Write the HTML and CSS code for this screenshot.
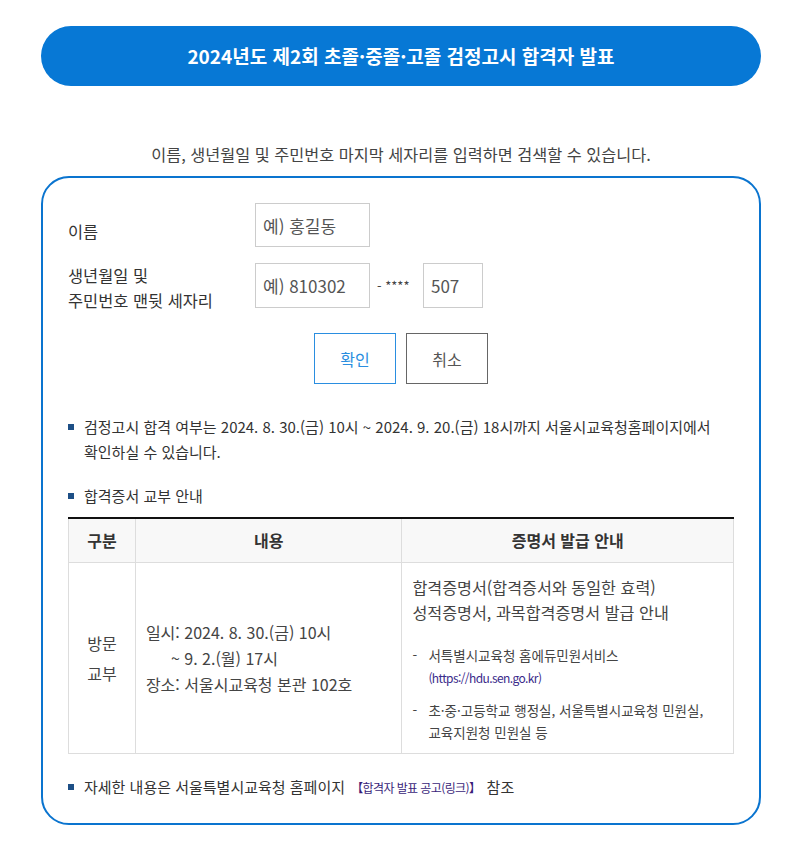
FILE: index.html
```html
<!DOCTYPE html>
<html lang="ko">
<head>
<meta charset="utf-8">
<title>2024년도 제2회 검정고시 합격자 발표</title>
<link rel="stylesheet" href="styles.css">
</head>
<body>
<div class="page">
  <h1 class="title">2024년도 제2회 초졸·중졸·고졸 검정고시 합격자 발표</h1>
  <p class="intro">이름, 생년월일 및 주민번호 마지막 세자리를 입력하면 검색할 수 있습니다.</p>
  <div class="box">
    <div class="form">
      <div class="row row-name">
        <label class="label" for="nm">이름</label>
        <input class="inp inp-name" id="nm" type="text" placeholder="예) 홍길동">
      </div>
      <div class="row row-birth">
        <label class="label" for="bd">생년월일 및<br>주민번호 맨뒷 세자리</label>
        <div class="birth-fields">
          <input class="inp inp-name" id="bd" type="text" placeholder="예) 810302">
          <span class="mask">- ****</span>
          <input class="inp inp-tail" type="text" placeholder="507">
        </div>
      </div>
      <div class="buttons">
        <button class="btn btn-ok" type="button">확인</button>
        <button class="btn btn-cancel" type="button">취소</button>
      </div>
    </div>
    <ul class="notes">
      <li class="note">검정고시 합격 여부는 2024. 8. 30.(금) 10시 ~ 2024. 9. 20.(금) 18시까지 서울시교육청홈페이지에서<br>확인하실 수 있습니다.</li>
      <li class="note note-sub">합격증서 교부 안내</li>
    </ul>
    <table class="tbl">
      <thead>
        <tr>
          <th class="c1">구분</th>
          <th class="c2">내용</th>
          <th class="c3">증명서 발급 안내</th>
        </tr>
      </thead>
      <tbody>
        <tr>
          <td class="c1 kind">방문<br>교부</td>
          <td class="c2 when">일시: 2024. 8. 30.(금) 10시<br><span class="indent">~ 9. 2.(월) 17시</span><br>장소: 서울시교육청 본관 102호</td>
          <td class="c3 cert">
            <p class="cert-head">합격증명서(합격증서와 동일한 효력)<br>성적증명서, 과목합격증명서 발급 안내</p>
            <ul class="dash">
              <li>서특별시교육청 홈에듀민원서비스<br><span class="url">(https://hdu.sen.go.kr)</span></li>
              <li>초·중·고등학교 행정실, 서울특별시교육청 민원실,<br>교육지원청 민원실 등</li>
            </ul>
          </td>
        </tr>
      </tbody>
    </table>
    <ul class="notes notes-end">
      <li class="note">자세한 내용은 서울특별시교육청 홈페이지 <a class="link" href="#">【합격자 발표 공고(링크)】</a> 참조</li>
    </ul>
  </div>
</div>
</body>
</html>
```

FILE: styles.css
```css
* { box-sizing: border-box; }
html, body { margin: 0; padding: 0; background: #fff; }
body {
  font-family: "Noto Sans CJK KR", "Noto Sans", sans-serif;
  color: #333;
  letter-spacing: 0;
}
.page {
  width: 720px;
  margin: 0 0 0 41px;
  padding-top: 26px;
}
.title {
  margin: 0;
  height: 60px;
  border-radius: 30px;
  background: #0778d5;
  color: #fff;
  font-size: 19px;
  font-weight: 700;
  line-height: 60px;
  text-align: center;
}
.intro {
  margin: 56px 0 0;
  font-size: 16.3px;
  line-height: 24px;
  text-align: center;
  color: #444;
}
.box {
  margin-top: 10px;
  border: 2px solid #0a74cf;
  border-radius: 28px;
  padding: 25px 25px 23px;
}
.form { display: flex; flex-direction: column; gap: 16px; }
.row { display: flex; }
.row-name { align-items: center; }
.row-birth { align-items: flex-start; }
.birth-fields { display: flex; align-items: center; }
.label {
  width: 187px;
  flex: none;
  font-size: 16.4px;
  line-height: 25px;
  color: #333;
}
.row-name .label { padding-top: 12px; }
.inp {
  height: 44px;
  border: 1px solid #ccc;
  padding: 0 7px;
  font-family: inherit;
  font-size: 17px;
  color: #555;
  background: #fff;
}
.inp::placeholder { color: #555; }
.inp-name { width: 115px; }
.row-birth .inp { height: 45px; }
.mask {
  width: 53px;
  padding-left: 7px;
  font-size: 13px;
  color: #444;
}
.inp-tail { width: 60px; }
.buttons {
  display: flex;
  justify-content: center;
  gap: 10px;
  margin-top: 4px;
}
.btn {
  width: 82px;
  height: 51px;
  background: #fff;
  font-family: inherit;
  font-size: 16px;
  cursor: pointer;
}
.btn-ok { border: 1px solid #2a8ee0; color: #2a8ee0; }
.btn-cancel { border: 1px solid #666; color: #555; }
.notes {
  list-style: none;
  margin: 30px 0 0;
  padding: 0;
}
.note {
  position: relative;
  padding-left: 16px;
  font-size: 15px;
  line-height: 25px;
  color: #333;
}
.note::before {
  content: "";
  position: absolute;
  left: 0;
  top: 10px;
  width: 6px;
  height: 6px;
  background: #1d4f86;
}
.note-sub { margin-top: 19px; }
.tbl {
  width: 666px;
  margin-top: 9px;
  border-collapse: collapse;
  border-top: 2px solid #111;
}
.tbl th, .tbl td {
  border: 1px solid #ddd;
  vertical-align: middle;
}
.tbl th {
  height: 44px;
  background: #f8f8f8;
  font-size: 16px;
  font-weight: 700;
  color: #333;
  border-top: none;
}
.c1 { width: 67px; text-align: center; }
.c2 { width: 267px; }
.c3 { width: 332px; }
.kind {
  font-size: 16px;
  line-height: 30px;
  color: #444;
}
.when {
  padding: 0 10px;
  font-size: 16px;
  line-height: 26px;
  color: #444;
}
.indent { padding-left: 25px; }
.cert { padding: 12px 10px 10px; vertical-align: top; }
.cert-head {
  margin: 0;
  font-size: 16.2px;
  line-height: 25px;
  color: #444;
}
.dash {
  list-style: none;
  margin: 19px 0 0;
  padding: 0;
}
.dash li {
  position: relative;
  padding-left: 16px;
  font-size: 13.5px;
  line-height: 22px;
  color: #444;
}
.dash li + li { margin-top: 10px; }
.dash li::before {
  content: "-";
  position: absolute;
  left: 0;
  top: 0;
}
.url { color: #3a2a8a; font-size: 12px; letter-spacing: -0.6px; }
.notes-end { margin-top: 20px; }
.link {
  color: #3a1e7a;
  font-size: 12px;
  letter-spacing: -0.6px;
  text-decoration: none;
  margin: 0 2px;
}
```
